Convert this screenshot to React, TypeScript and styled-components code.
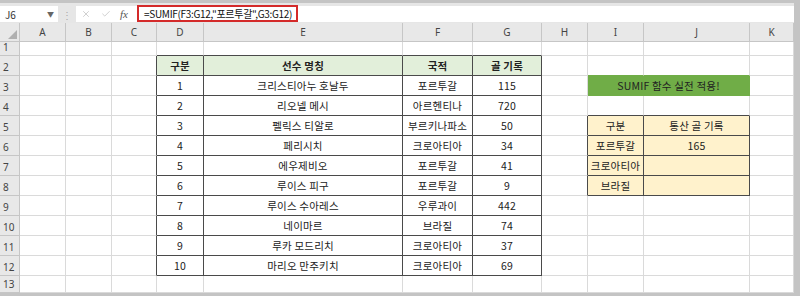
import { createGlobalStyle } from 'styled-components'
import styled from 'styled-components'
import { Check, X } from 'lucide-react'

const GlobalStyle = createGlobalStyle`
  html, body {
    margin: 0;
    padding: 0;
    background: #ffffff;
  }
  * {
    box-sizing: border-box;
  }
`

const GRID = '#dadada'
const HEAD_LINE = '#c6c6c6'
const DARK = '#4a4a4a'

const Frame = styled.div`
  width: 800px;
  height: 296px;
  background: #c4c4c4;
  padding: 3px 6px 3px 0;
  display: flex;
  flex-direction: column;
  font-family: 'Noto Sans CJK KR', 'Noto Sans', sans-serif;
  overflow: hidden;
`

const FormulaBar = styled.div`
  height: 20px;
  background: #e6e6e6;
  display: flex;
  align-items: flex-start;
  padding-top: 3px;
`

const NameBox = styled.div`
  width: 58px;
  height: 16px;
  background: #ffffff;
  display: flex;
  align-items: center;
  justify-content: space-between;
  padding: 0 4px 0 5px;
  font-size: 10px;
  color: #333;
`

const Caret = styled.span`
  font-size: 7px;
  color: #666;
`

const Dots = styled.div`
  width: 18px;
  height: 16px;
  display: flex;
  align-items: center;
  justify-content: center;
  color: #a8a8a8;
  font-size: 10px;
`

const InputArea = styled.div`
  flex: 1;
  height: 16px;
  background: #ffffff;
  display: flex;
  align-items: center;
`

const IconSlot = styled.span<{ $w: number }>`
  width: ${(p) => p.$w}px;
  display: flex;
  align-items: center;
  justify-content: center;
  color: #b4b4b4;
`

const Fx = styled.span`
  font-family: 'Liberation Serif', serif;
  font-style: italic;
  font-size: 11px;
  color: #555;
`

const Formula = styled.div`
  margin-left: 5px;
  margin-top: -2px;
  height: 17px;
  border: 2px solid #d42a2a;
  font-size: 10px;
  color: #111;
  display: flex;
  align-items: center;
  padding: 0 4px 0 5px;
  white-space: nowrap;
  letter-spacing: -0.3px;
`

const Sheet = styled.div`
  flex: 1;
  display: grid;
  grid-template-columns: 20px 46px 46px 45px 47px 199px 70px 69px 46px 56px 106px 44px;
  grid-template-rows: 19px 14px 20px repeat(10, 20px) 17px;
  background: #ffffff;
`

const ColHead = styled.div`
  background: #e8e8e8;
  border-right: 1px solid ${HEAD_LINE};
  border-bottom: 1px solid ${HEAD_LINE};
  display: flex;
  align-items: center;
  justify-content: center;
  font-family: 'Noto Sans', sans-serif;
  font-size: 10px;
  color: #444;
`

const Corner = styled(ColHead)`
  align-items: flex-end;
  justify-content: flex-end;
  padding: 0 2px 2px 0;
`

const RowHead = styled.div`
  background: #e8e8e8;
  border-right: 1px solid ${HEAD_LINE};
  border-bottom: 1px solid ${HEAD_LINE};
  display: flex;
  align-items: flex-end;
  padding: 0 0 1px 3px;
  font-family: 'Noto Sans', sans-serif;
  font-size: 10px;
  color: #444;
`

const Cell = styled.div<{
  $bg?: string
  $right?: string
  $bottom?: string
  $bold?: boolean
  $span?: number
}>`
  background: ${(p) => p.$bg || '#ffffff'};
  border-right: 1px solid ${(p) => p.$right || GRID};
  border-bottom: 1px solid ${(p) => p.$bottom || GRID};
  grid-column: span ${(p) => p.$span || 1};
  display: flex;
  align-items: center;
  justify-content: center;
  font-size: 10.5px;
  font-weight: ${(p) => (p.$bold ? 600 : 400)};
  color: #222;
  white-space: nowrap;
  letter-spacing: 0.2px;
`

const columns = ['A', 'B', 'C', 'D', 'E', 'F', 'G', 'H', 'I', 'J', 'K']

const players: [string, string, string, string][] = [
  ['1', '크리스티아누 호날두', '포르투갈', '115'],
  ['2', '리오넬 메시', '아르헨티나', '720'],
  ['3', '펠릭스 티알로', '부르키나파소', '50'],
  ['4', '페리시치', '크로아티아', '34'],
  ['5', '에우제비오', '포르투갈', '41'],
  ['6', '루이스 피구', '포르투갈', '9'],
  ['7', '루이스 수아레스', '우루과이', '442'],
  ['8', '네이마르', '브라질', '74'],
  ['9', '루카 모드리치', '크로아티아', '37'],
  ['10', '마리오 만주키치', '크로아티아', '69'],
]

const summary: Record<number, [string, string]> = {
  5: ['구분', '통산 골 기록'],
  6: ['포르투갈', '165'],
  7: ['크로아티아', ''],
  8: ['브라질', ''],
}

function renderRow(row: number) {
  const cells = []
  for (let c = 0; c < columns.length; c++) {
    const col = columns[c]
    const key = `${col}${row}`
    const inTable = row >= 2 && row <= 12 && c >= 3 && c <= 6
    const inSummary = row >= 5 && row <= 8 && (c === 8 || c === 9)

    // merged title cell I3:J3
    if (row === 3 && c === 8) {
      cells.push(
        <Cell key={key} $span={2} $bg="#70ad47" $right="#70ad47" $bottom="#70ad47">
          SUMIF 함수 실전 적용!
        </Cell>
      )
      continue
    }
    if (row === 3 && c === 9) continue

    let right: string | undefined
    let bottom: string | undefined
    let bg: string | undefined
    let text = ''
    let bold = false

    if (inTable) {
      right = DARK
      bottom = DARK
      if (row === 2) {
        bg = '#e2efda'
        bold = true
        text = ['구분', '선수 명칭', '국적', '골 기록'][c - 3]
      } else {
        text = players[row - 3][c - 3]
      }
    }
    if (c === 2 && row >= 2 && row <= 12) right = DARK
    if (row === 1 && c >= 3 && c <= 6) bottom = DARK

    if (inSummary) {
      right = DARK
      bottom = DARK
      bg = '#fff2cc'
      text = summary[row][c - 8]
    }
    if (c === 7 && row >= 5 && row <= 8) right = DARK
    if (row === 4 && (c === 8 || c === 9)) bottom = DARK
    if (row === 2 && (c === 8 || c === 9)) bottom = '#70ad47'

    cells.push(
      <Cell key={key} $bg={bg} $right={right} $bottom={bottom} $bold={bold}>
        {text}
      </Cell>
    )
  }
  return cells
}

export default function App() {
  const rows = Array.from({ length: 13 }, (_, i) => i + 1)

  return (
    <>
      <GlobalStyle />
      <Frame>
        <FormulaBar>
          <NameBox>
            J6
            <Caret>▼</Caret>
          </NameBox>
          <Dots>⋮</Dots>
          <InputArea>
            <IconSlot $w={20}>
              <X size={10} strokeWidth={1.5} />
            </IconSlot>
            <IconSlot $w={20}>
              <Check size={10} strokeWidth={1.5} />
            </IconSlot>
            <IconSlot $w={16}>
              <Fx>fx</Fx>
            </IconSlot>
            <Formula>=SUMIF(F3:G12,"포르투갈",G3:G12)</Formula>
          </InputArea>
        </FormulaBar>
        <Sheet>
          <Corner>
            <svg width="9" height="9" viewBox="0 0 9 9">
              <polygon points="9,0 9,9 0,9" fill="#b0b0b0" />
            </svg>
          </Corner>
          {columns.map((c) => (
            <ColHead key={c}>{c}</ColHead>
          ))}
          {rows.map((r) => [
            <RowHead key={`h${r}`}>{r}</RowHead>,
            ...renderRow(r),
          ])}
        </Sheet>
      </Frame>
    </>
  )
}
